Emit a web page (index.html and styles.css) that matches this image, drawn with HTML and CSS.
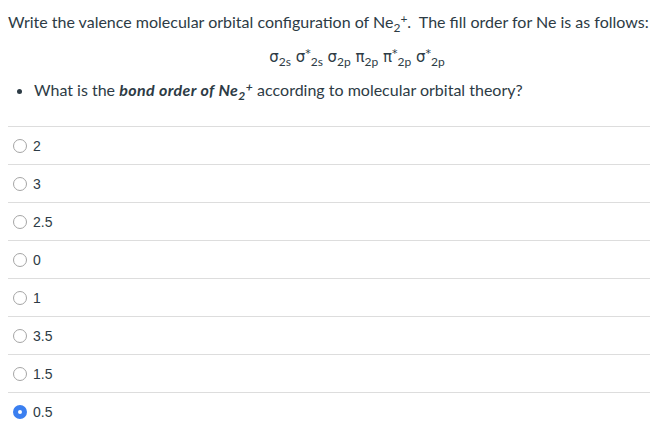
FILE: index.html
```html
<!DOCTYPE html>
<html lang="en">
<head>
    <meta charset="UTF-8">
    <title>Quiz Question</title>
    <link rel="stylesheet" href="styles.css">
</head>
<body>
    <div class="question">
        <p class="prompt">Write the valence molecular orbital configuration of Ne<sub>2</sub><sup>+</sup>.&nbsp; The fill order for Ne is as follows:</p>
        <p class="orbitals">σ<sub>2s</sub> σ<sup>*</sup><sub>2s</sub> σ<sub>2p</sub> π<sub>2p</sub> π<sup>*</sup><sub>2p</sub> σ<sup>*</sup><sub>2p</sub></p>
        <ul class="ask">
            <li>What is the <strong><em>bond order of Ne<sub>2</sub><sup>+</sup></em></strong> according to molecular orbital theory?</li>
        </ul>
    </div>
    <div class="answers">
        <label class="answer"><span class="radio"></span>2</label>
        <label class="answer"><span class="radio"></span>3</label>
        <label class="answer"><span class="radio"></span>2.5</label>
        <label class="answer"><span class="radio"></span>0</label>
        <label class="answer"><span class="radio"></span>1</label>
        <label class="answer"><span class="radio"></span>3.5</label>
        <label class="answer"><span class="radio"></span>1.5</label>
        <label class="answer"><span class="radio checked"></span>0.5</label>
    </div>
</body>
</html>
```

FILE: styles.css
```css
body {
    margin: 0;
    padding: 10px 0 0 8px;
    font-family: 'Lato', sans-serif;
    color: #2d3b45;
    background: white;
}
.question {
    font-size: 16px;
    line-height: 24px;
}
.question p {
    margin: 0;
}
sub, sup {
    font-size: 12px;
    line-height: 0;
}
sub {
    vertical-align: -4px;
}
sup {
    vertical-align: 5px;
}
.orbitals {
    margin-top: 11px !important;
    text-align: center;
    padding-left: 56px;
    font-family: 'DejaVu Sans', sans-serif;
    font-size: 15px;
}
.orbitals sub {
    font-family: 'Lato', sans-serif;
    font-size: 12px;
}
.orbitals sup {
    font-family: 'DejaVu Sans', sans-serif;
    font-size: 11px;
}
.ask {
    margin: 9px 0 24px 0;
    padding-left: 26px;
}
.ask strong {
    font-weight: 700;
    letter-spacing: 0.4px;
}
.answers {
    display: flex;
    flex-direction: column;
}
.answer {
    display: flex;
    align-items: center;
    gap: 6px;
    height: 37px;
    border-top: 1px solid #dddddd;
    padding-left: 5px;
    font-family: 'Liberation Sans', Arial, sans-serif;
    font-size: 14px;
}
.radio {
    width: 14px;
    height: 14px;
    border: 1px solid #a5a5a5;
    border-radius: 50%;
    box-sizing: border-box;
    display: inline-block;
}
.radio.checked {
    border: 5px solid #3b7ff0;
    background: white;
}
```
